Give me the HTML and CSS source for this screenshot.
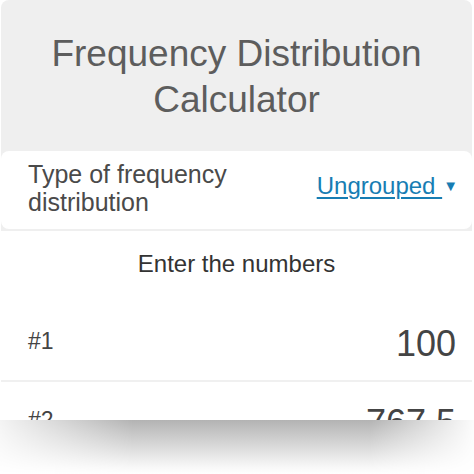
FILE: index.html
```html
<!DOCTYPE html>
<html lang="en">
<head>
    <meta charset="UTF-8">
    <meta name="viewport" content="width=device-width, initial-scale=1.0">
    <title>Frequency Distribution Calculator</title>
    <link rel="stylesheet" href="styles.css">
</head>
<body>
    <div class="calc">
        <div class="calc-head">
            <h1>Frequency Distribution Calculator</h1>
        </div>

        <div class="type-card">
            <div class="type-label">Type of frequency<br>distribution</div>
            <a class="type-link" href="#">Ungrouped <span class="caret">&#9660;</span></a>
        </div>

        <div class="numbers">
            <div class="numbers-title">Enter the numbers</div>
            <div class="num-row">
                <span class="num-label">#1</span>
                <span class="num-value">100</span>
            </div>
            <div class="num-row">
                <span class="num-label">#2</span>
                <span class="num-value">767.5</span>
            </div>
        </div>
    </div>
    <div class="fade"></div>
</body>
</html>
```

FILE: styles.css
```css
body {
    margin: 0;
    padding: 0;
    height: 474px;
    overflow: hidden;
    background: #fff;
    font-family: "Liberation Sans", Arial, sans-serif;
}

.calc {
    margin: 0 2px 0 1px;
    height: 420px;
    overflow: hidden;
    background: #efefef;
    border-radius: 8px 8px 0 0;
}

.calc-head {
    padding: 31px 10px 27px;
    text-align: center;
}

h1 {
    margin: 0;
    font-size: 37px;
    line-height: 46px;
    font-weight: normal;
    color: #5d5d5d;
}

.type-card {
    display: flex;
    justify-content: space-between;
    align-items: center;
    margin-top: 1px;
    padding: 9px 14px 13px 27px;
    background: #fff;
    border-radius: 8px;
}

.type-label {
    font-size: 25px;
    line-height: 28px;
    color: #4a4a4a;
}

.type-link {
    font-size: 24px;
    color: #177db3;
    text-decoration: underline;
    text-decoration-thickness: 1.5px;
    text-underline-offset: 3px;
    margin-top: -4px;
}

.caret {
    display: inline-block;
    font-size: 15px;
    vertical-align: 3px;
    margin-left: 1px;
    text-decoration: none;
}

.numbers {
    margin-top: 2px;
    background: #fff;
}

.numbers-title {
    padding: 19px 0 25px;
    text-align: center;
    font-size: 24px;
    line-height: 28px;
    color: #333;
}

.num-row {
    display: flex;
    justify-content: space-between;
    align-items: center;
    height: 77px;
    padding: 0 16px 0 27px;
    border-bottom: 2px solid #f0f0f0;
}

.num-label {
    font-size: 23px;
    color: #444;
}

.num-value {
    font-size: 36px;
    color: #444;
    margin-top: 4px;
}

.fade {
    height: 54px;
    background: linear-gradient(#b3b3b3, #f6f6f6 85%, #fff);
    -webkit-mask-image: linear-gradient(to right, rgba(0, 0, 0, 0.15), #000 28%, #000 78%, rgba(0, 0, 0, 0.05));
    mask-image: linear-gradient(to right, rgba(0, 0, 0, 0.15), #000 28%, #000 78%, rgba(0, 0, 0, 0.05));
}
```
